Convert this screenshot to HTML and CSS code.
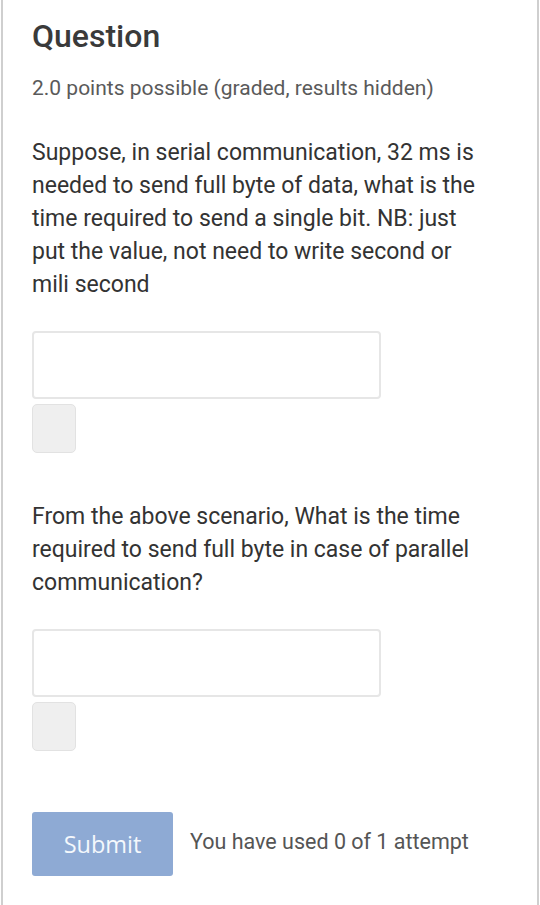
FILE: index.html
```html
<!DOCTYPE html>
<html>
<head>
<meta charset="utf-8">
<link rel="stylesheet" href="styles.css">
</head>
<body>
<div class="problem">
  <h2 class="title">Question</h2>
  <div class="meta">2.0 points possible (graded, results hidden)</div>
  <div class="part">
    <p class="prompt">Suppose, in serial communication, 32 ms is<br>needed to send full byte of data, what is the<br>time required to send a single bit. NB: just<br>put the value, not need to write second or<br>mili second</p>
    <input class="answer" type="text">
    <div class="status"></div>
  </div>
  <div class="part">
    <p class="prompt">From the above scenario, What is the time<br>required to send full byte in case of parallel<br>communication?</p>
    <input class="answer" type="text">
    <div class="status"></div>
  </div>
  <div class="actions">
    <button class="submit">Submit</button>
    <span class="attempts">You have used 0 of 1 attempt</span>
  </div>
</div>
</body>
</html>
```
FILE: styles.css
```css
html, body {
  margin: 0;
  padding: 0;
  background: #ffffff;
}
body {
  font-family: Roboto, "Liberation Sans", sans-serif;
  color: #333333;
}
.problem {
  margin-left: 1px;
  width: 538px;
  min-height: 905px;
  box-sizing: border-box;
  border-left: 2px solid #cfcfcf;
  border-right: 2px solid #cfcfcf;
  padding: 17px 0 0 29px;
}
.title {
  margin: 0;
  font-size: 32px;
  font-weight: 500;
  line-height: 38px;
  color: #3a3a3a;
}
.meta {
  margin-top: 20px;
  font-size: 21px;
  line-height: 26px;
  color: #5a5a5a;
}
.part {
  display: flex;
  flex-direction: column;
}
.prompt {
  margin: 35px 0 0 0;
  width: 490px;
  font-size: 23px;
  line-height: 33px;
  color: #333333;
  white-space: nowrap;
}
.answer {
  margin-top: 30px;
  width: 349px;
  height: 68px;
  box-sizing: border-box;
  border: 2px solid #e6e6e6;
  border-radius: 4px;
  background: #fff;
  padding: 0;
}
.status {
  margin-top: 5px;
  width: 44px;
  height: 49px;
  box-sizing: border-box;
  border: 1px solid #e2e2e2;
  border-radius: 5px;
  background: #efefef;
}
.part + .part .prompt {
  margin-top: 47px;
}
.actions {
  margin-top: 61px;
  display: flex;
  align-items: center;
  gap: 17px;
}
.submit {
  width: 141px;
  height: 64px;
  border: none;
  border-radius: 3px;
  background: #8eaad4;
  color: #f4f8fc;
  font-family: "Open Sans", sans-serif;
  font-size: 23.5px;
  padding: 0;
}
.attempts {
  font-size: 21.5px;
  color: #555555;
  position: relative;
  top: -3px;
}
```
